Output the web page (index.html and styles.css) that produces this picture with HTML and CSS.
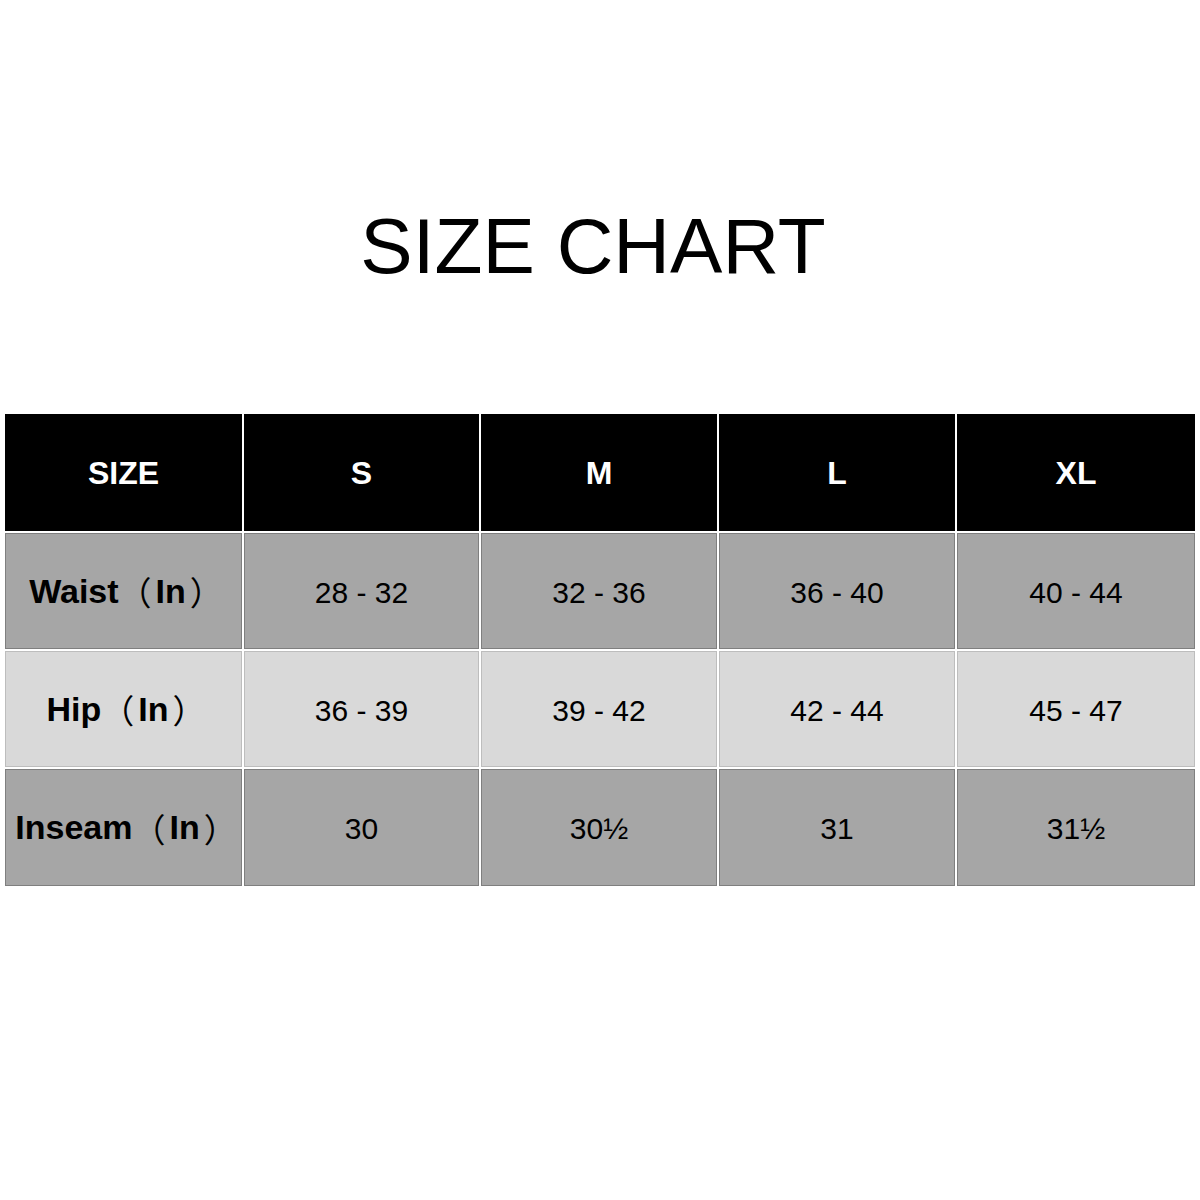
FILE: index.html
```html
<!DOCTYPE html>
<html>
<head>
<meta charset="utf-8">
<link rel="stylesheet" href="styles.css">
</head>
<body>
<div class="title">SIZE CHART</div>
<div class="chart">
  <div class="cell head">SIZE</div>
  <div class="cell head">S</div>
  <div class="cell head">M</div>
  <div class="cell head">L</div>
  <div class="cell head">XL</div>

  <div class="cell dark label">Waist<span class="fw open">（</span>In<span class="fw close">）</span></div>
  <div class="cell dark">28 - 32</div>
  <div class="cell dark">32 - 36</div>
  <div class="cell dark">36 - 40</div>
  <div class="cell dark">40 - 44</div>

  <div class="cell light label">Hip<span class="fw open">（</span>In<span class="fw close">）</span></div>
  <div class="cell light">36 - 39</div>
  <div class="cell light">39 - 42</div>
  <div class="cell light">42 - 44</div>
  <div class="cell light">45 - 47</div>

  <div class="cell dark label">Inseam<span class="fw open">（</span>In<span class="fw close">）</span></div>
  <div class="cell dark">30</div>
  <div class="cell dark">30½</div>
  <div class="cell dark">31</div>
  <div class="cell dark">31½</div>
</div>
</body>
</html>
```
FILE: styles.css
```css
html, body {
  margin: 0;
  padding: 0;
  background: #ffffff;
}
body {
  width: 1200px;
  height: 1200px;
  font-family: "Liberation Sans", Arial, "Noto Sans CJK SC", sans-serif;
  color: #000;
}
.title {
  margin-top: 207px;
  padding-right: 14px;
  font-size: 78.5px;
  line-height: 1;
  text-align: center;
}
.chart {
  margin-top: 128px;
  margin-left: 5px;
  display: grid;
  grid-template-columns: 237px 235px 236px 236px 238px;
  grid-template-rows: 117px 116px 116px 117px;
  column-gap: 2px;
  row-gap: 2px;
  width: 1190px;
}
.cell {
  box-sizing: border-box;
  display: flex;
  align-items: center;
  justify-content: center;
  font-size: 30px;
  white-space: nowrap;
  padding-top: 4px;
}
.head {
  background: #000;
  color: #fff;
  font-weight: bold;
  font-size: 32px;
  padding-top: 3px;
}
.dark {
  background: #a6a6a6;
  border: 1px solid #7f7f7f;
}
.light {
  background: #d9d9d9;
  border: 1px solid #bdbdbd;
}
.label {
  font-weight: bold;
  font-size: 34px;
  padding-top: 1px;
  padding-left: 5px;
}
.fw {
  font-family: "Noto Sans CJK SC", sans-serif;
  font-weight: normal;
  font-size: 33px;
}
.open {
  margin-right: 4px;
}
.close {
  margin-left: 4px;
}
```
